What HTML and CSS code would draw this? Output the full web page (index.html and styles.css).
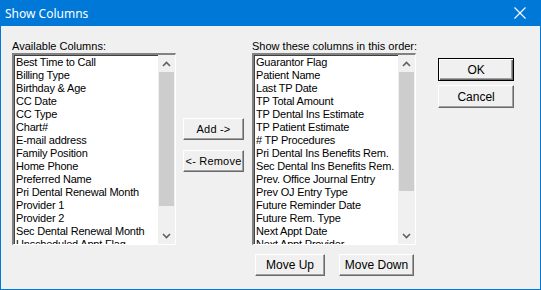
FILE: index.html
```html
<!DOCTYPE html>
<html>
<head>
<meta charset="utf-8">
<link rel="stylesheet" href="styles.css">
</head>
<body>
<div class="window">
  <div class="titlebar">
    <span class="title">Show Columns</span>
    <svg class="close" width="12" height="12" viewBox="0 0 12 12"><path d="M0.5 0.5 L11.5 11.5 M11.5 0.5 L0.5 11.5" stroke="#fff" stroke-width="1.1" fill="none"/></svg>
  </div>
  <div class="content">
    <div class="col">
      <div class="label">Available Columns:</div>
      <div class="listbox">
        <div class="items">
          <div>Best Time to Call</div>
          <div>Billing Type</div>
          <div>Birthday &amp; Age</div>
          <div>CC Date</div>
          <div>CC Type</div>
          <div>Chart#</div>
          <div>E-mail address</div>
          <div>Family Position</div>
          <div>Home Phone</div>
          <div>Preferred Name</div>
          <div>Pri Dental Renewal Month</div>
          <div>Provider 1</div>
          <div>Provider 2</div>
          <div>Sec Dental Renewal Month</div>
          <div>Unscheduled Appt Flag</div>
        </div>
        <div class="scrollbar">
          <div class="arrow"><svg width="9" height="6" viewBox="0 0 9 6"><path d="M1 5 L4.5 1.5 L8 5" stroke="#606060" stroke-width="1.6" fill="none"/></svg></div>
          <div class="track"><div class="thumb thumb-left"></div></div>
          <div class="arrow"><svg width="9" height="6" viewBox="0 0 9 6"><path d="M1 1 L4.5 4.5 L8 1" stroke="#606060" stroke-width="1.6" fill="none"/></svg></div>
        </div>
      </div>
    </div>
    <div class="mid">
      <div class="btn btn-add">Add -&gt;</div>
      <div class="btn btn-remove">&lt;- Remove</div>
    </div>
    <div class="col col-right">
      <div class="label">Show these columns in this order:</div>
      <div class="listbox">
        <div class="items">
          <div>Guarantor Flag</div>
          <div>Patient Name</div>
          <div>Last TP Date</div>
          <div>TP Total Amount</div>
          <div>TP Dental Ins Estimate</div>
          <div>TP Patient Estimate</div>
          <div># TP Procedures</div>
          <div>Pri Dental Ins Benefits Rem.</div>
          <div>Sec Dental Ins Benefits Rem.</div>
          <div>Prev. Office Journal Entry</div>
          <div>Prev OJ Entry Type</div>
          <div>Future Reminder Date</div>
          <div>Future Rem. Type</div>
          <div>Next Appt Date</div>
          <div>Next Appt Provider</div>
        </div>
        <div class="scrollbar">
          <div class="arrow"><svg width="9" height="6" viewBox="0 0 9 6"><path d="M1 5 L4.5 1.5 L8 5" stroke="#606060" stroke-width="1.6" fill="none"/></svg></div>
          <div class="track"><div class="thumb thumb-right"></div></div>
          <div class="arrow"><svg width="9" height="6" viewBox="0 0 9 6"><path d="M1 1 L4.5 4.5 L8 1" stroke="#606060" stroke-width="1.6" fill="none"/></svg></div>
        </div>
      </div>
      <div class="move-row">
        <div class="btn btn-up">Move Up</div>
        <div class="btn btn-down">Move Down</div>
      </div>
    </div>
    <div class="side">
      <div class="btn btn-ok">OK</div>
      <div class="btn btn-cancel">Cancel</div>
    </div>
  </div>
</div>
</body>
</html>
```
FILE: styles.css
```css
* { box-sizing: border-box; }
html, body { margin: 0; padding: 0; }
body { width: 541px; height: 290px; overflow: hidden; font-family: "Liberation Sans", Arial, sans-serif; }
.window {
  width: 541px; height: 290px;
  background: #f0f0f0;
  border: 1px solid #0078d7;
  border-top: none;
  display: flex; flex-direction: column;
}
.titlebar {
  height: 26px;
  margin: 0 -1px;
  background: #0078d7;
  display: flex; align-items: center; justify-content: space-between;
  padding: 0 15px 0 5px;
}
.title { color: #fff; font-family: "Noto Sans", "Liberation Sans", sans-serif; font-size: 12px; }
.close { display: block; }
.content {
  display: flex; align-items: flex-start;
  padding: 14px 0 0 11px;
  font-size: 11px; color: #000;
}
.label { height: 13px; line-height: 13px; font-size: 11px; white-space: nowrap; }
.listbox {
  width: 164px; height: 192px;
  background: #fff;
  border-style: solid; border-width: 2px 1px 1px 2px;
  border-color: #828282 #fff #fff #828282;
  box-shadow: inset 1px 1px 0 #404040;
  display: flex;
  overflow: hidden;
}
.items { flex: 1; padding: 1px 0 0 2px; overflow: hidden; letter-spacing: -0.2px; }
.items div { height: 13px; line-height: 13px; white-space: nowrap; }
.scrollbar { width: 17px; flex: none; display: flex; flex-direction: column; background: #f0f0f0; }
.arrow { height: 17px; display: flex; align-items: center; justify-content: center; }
.track { flex: 1; }
.thumb { background: #cdcdcd; margin: 0 1px; }
.thumb-left { height: 134px; }
.thumb-right { height: 119px; }
.mid { display: flex; flex-direction: column; margin: 78px 0 0 7px; width: 61px; }
.btn {
  height: 22px;
  background: #f0f0f0;
  border: 1px solid;
  border-color: #fff #696969 #696969 #fff;
  box-shadow: inset -1px -1px 0 #a0a0a0;
  display: flex; align-items: center; justify-content: center;
  font-size: 11px; white-space: nowrap;
}
.btn-add, .btn-remove { letter-spacing: 0.2px; }
.btn-remove { margin-top: 10px; }
.col-right { margin-left: 8px; }
.move-row { display: flex; margin-top: 9px; padding-left: 3px; }
.btn-up, .btn-down { font-size: 12px; }
.btn-up { width: 70px; }
.btn-down { width: 75px; margin-left: 14px; }
.side { display: flex; flex-direction: column; margin: 18px 0 0 21px; width: 76px; }
.btn-ok, .btn-cancel { font-size: 12px; }
.btn-ok { height: 23px; border-color: #000; box-shadow: inset 1px 1px 0 #fff, inset -1px -1px 0 #696969, inset -2px -2px 0 #a0a0a0; }
.btn-cancel { height: 23px; margin-top: 4px; }
```
